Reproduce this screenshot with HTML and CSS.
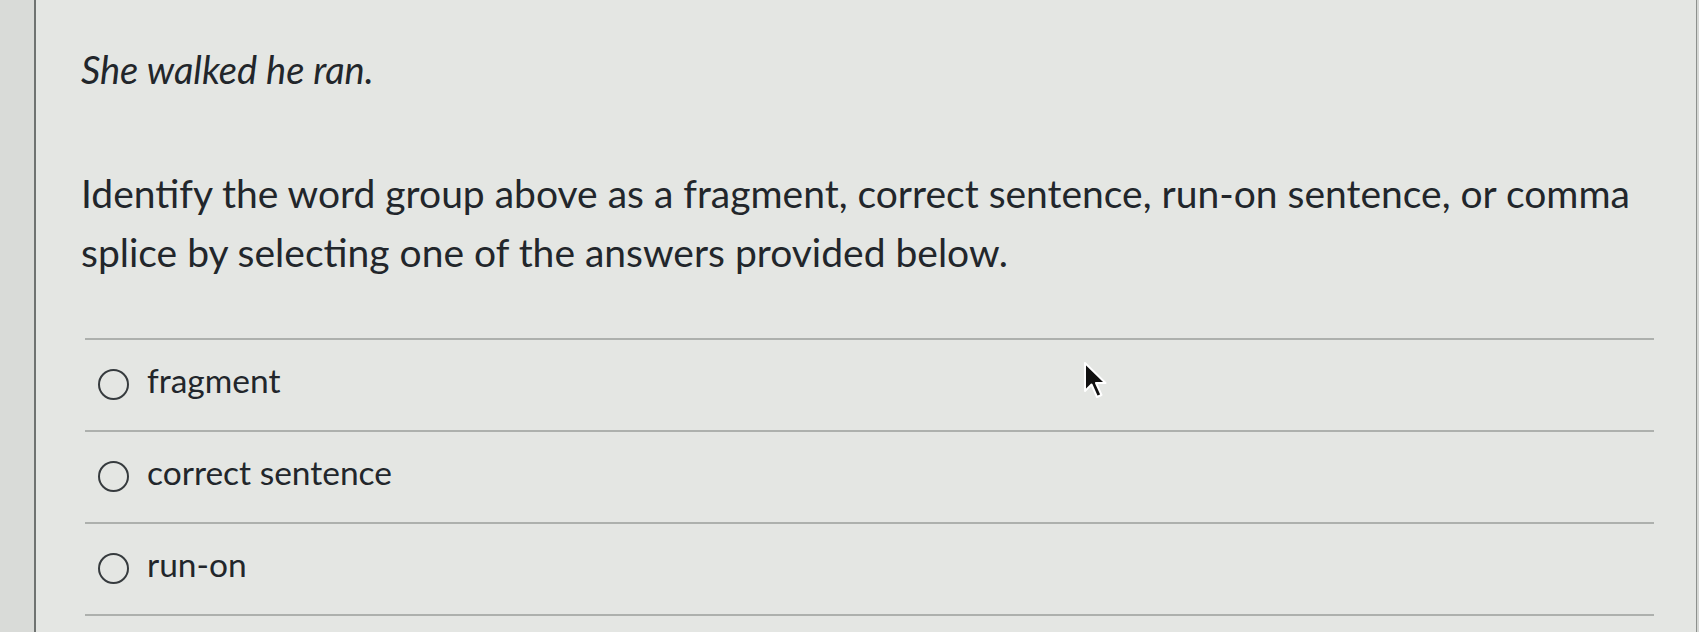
FILE: index.html
```html
<!DOCTYPE html>
<html lang="en">

<head>
    <meta name="viewport" content="width=device-width, initial-scale=1">
    <link rel="stylesheet" href="styles.css">
</head>

<body>

    <div class="screen">
        <!-- Left edge of the quiz frame -->
        <div class="edge-left"></div>

        <!-- Question panel -->
        <div class="question">
            <p class="prompt">She walked he ran.</p>
            <p class="instructions">Identify the word group above as a fragment, correct sentence, run-on sentence, or comma splice by selecting one of the answers provided below.</p>

            <div class="answers">
                <label class="answer">
                    <input type="radio" name="answer" value="fragment">
                    <span class="radio"></span>
                    <span class="answer-text">fragment</span>
                </label>
                <label class="answer">
                    <input type="radio" name="answer" value="correct">
                    <span class="radio"></span>
                    <span class="answer-text">correct sentence</span>
                </label>
                <label class="answer">
                    <input type="radio" name="answer" value="run-on">
                    <span class="radio"></span>
                    <span class="answer-text">run-on</span>
                </label>
            </div>
        </div>

        <div class="edge-right"></div>

        <!-- Mouse pointer hovering over the first answer -->
        <svg class="pointer" width="26" height="40" viewBox="0 0 26 40">
            <path d="M2 2 L2 30 L8.5 23.5 L14 36 L18.5 34 L13 22 L22.5 22 Z" fill="#111" stroke="#fff" stroke-width="2" stroke-linejoin="round" />
        </svg>
    </div>

</body>

</html>
```

FILE: styles.css
```css
* {
    box-sizing: border-box;
}

body {
    margin: 0;
    background-color: #dcdedb;
    font-family: Lato, "Open Sans", sans-serif;
    color: #22262b;
}

/* Whole photographed screen */
.screen {
    display: flex;
    height: 632px;
    overflow: hidden;
}

.edge-left {
    width: 36px;
    flex-shrink: 0;
    background-color: #d9dbd8;
    border-right: 2px solid #6f7371;
}

.edge-right {
    width: 3px;
    flex-shrink: 0;
    background-color: #d6d8d5;
    border-left: 1px solid #8d908d;
}

/* Question panel */
.question {
    flex: 1;
    background-color: #e4e6e3;
    padding: 46px 42px 0 45px;
}

.prompt {
    margin: 0;
    font-size: 38px;
    line-height: 46px;
    font-style: italic;
}

.instructions {
    margin: 72px 0 0 0;
    font-size: 39px;
    line-height: 59px;
}

/* Answer list */
.answers {
    margin-top: 56px;
    margin-left: 4px;
    border-top: 2px solid #adb0ad;
}

.answer {
    display: flex;
    align-items: center;
    gap: 18px;
    padding: 20px 0 30px 13px;
    border-bottom: 2px solid #adb0ad;
    cursor: pointer;
}

.answer input {
    display: none;
}

.radio {
    width: 31px;
    height: 31px;
    margin-top: 8px;
    border: 2px solid #363b3e;
    border-radius: 50%;
    flex-shrink: 0;
}

.answer-text {
    font-size: 33.5px;
    line-height: 40px;
}

.pointer {
    position: absolute;
    left: 1083px;
    top: 361px;
}
```
